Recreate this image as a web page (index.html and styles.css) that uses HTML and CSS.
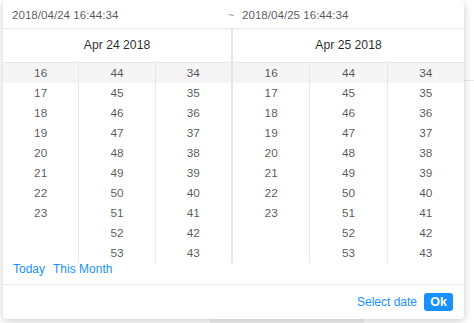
FILE: index.html
```html
<!DOCTYPE html>
<html>
<head>
<meta charset="utf-8">
<link rel="stylesheet" href="styles.css">
</head>
<body>
<div class="page">
  <div class="bg-line"></div>
  <div class="bg-block"></div>
  <div class="picker">
    <div class="inputs">
      <span class="in in-start">2018/04/24 16:44:34</span>
      <span class="sep">~</span>
      <span class="in in-end">2018/04/25 16:44:34</span>
    </div>
    <div class="panels">
      <div class="panel panel-left">
        <div class="phead">Apr 24 2018</div>
        <div class="cols">
          <ul class="col"><li class="sel">16</li><li>17</li><li>18</li><li>19</li><li>20</li><li>21</li><li>22</li><li>23</li><li class="empty"></li><li class="empty"></li></ul>
          <ul class="col"><li class="sel">44</li><li>45</li><li>46</li><li>47</li><li>48</li><li>49</li><li>50</li><li>51</li><li>52</li><li>53</li></ul>
          <ul class="col"><li class="sel">34</li><li>35</li><li>36</li><li>37</li><li>38</li><li>39</li><li>40</li><li>41</li><li>42</li><li>43</li></ul>
        </div>
      </div>
      <div class="panel panel-right">
        <div class="phead">Apr 25 2018</div>
        <div class="cols">
          <ul class="col"><li class="sel">16</li><li>17</li><li>18</li><li>19</li><li>20</li><li>21</li><li>22</li><li>23</li><li class="empty"></li><li class="empty"></li></ul>
          <ul class="col"><li class="sel">44</li><li>45</li><li>46</li><li>47</li><li>48</li><li>49</li><li>50</li><li>51</li><li>52</li><li>53</li></ul>
          <ul class="col"><li class="sel">34</li><li>35</li><li>36</li><li>37</li><li>38</li><li>39</li><li>40</li><li>41</li><li>42</li><li>43</li></ul>
        </div>
      </div>
    </div>
    <div class="ranges">
      <a class="link">Today</a>
      <a class="link">This Month</a>
    </div>
    <div class="footer">
      <a class="link">Select date</a>
      <button class="ok">Ok</button>
    </div>
  </div>
</div>
</body>
</html>
```

FILE: styles.css
```css
html, body {
  margin: 0;
  padding: 0;
  background: #fff;
}
body {
  font-family: "Liberation Sans", Arial, sans-serif;
  font-size: 12px;
  color: rgba(0, 0, 0, 0.65);
}
.page {
  position: relative;
  width: 474px;
  height: 323px;
  overflow: hidden;
}
.bg-line {
  position: absolute;
  left: 440px;
  top: 80px;
  width: 34px;
  height: 1px;
  background: #e8e8e8;
}
.bg-block {
  position: absolute;
  left: 210px;
  top: 318px;
  width: 154px;
  height: 5px;
  background: #f2f2f2;
}
.picker {
  position: absolute;
  left: 3px;
  top: 0;
  width: 461px;
  background: #fff;
  border-radius: 4px;
  box-shadow: 0 2px 8px rgba(0, 0, 0, 0.2);
}
.inputs {
  display: flex;
  align-items: center;
  height: 28px;
  border-bottom: 1px solid #e8e8e8;
  font-size: 11.6px;
  color: rgba(0, 0, 0, 0.68);
}
.in-start {
  width: 211px;
  padding-left: 9px;
}
.sep {
  width: 16px;
  text-align: center;
  color: rgba(0, 0, 0, 0.45);
}
.in-end {
  padding-left: 3px;
}
.panels {
  display: flex;
}
.panel {
  flex: 0 0 auto;
}
.panel-left {
  width: 228px;
  border-right: 1px solid #e6e6e6;
}
.panel-right {
  width: 231px;
  border-left: 1px solid #e6e6e6;
}
.phead {
  height: 33px;
  line-height: 33px;
  text-align: center;
  font-size: 12.2px;
  color: rgba(0, 0, 0, 0.85);
  border-bottom: 1px solid #e8e8e8;
}
.cols {
  display: flex;
  height: 200px;
}
.col {
  list-style: none;
  margin: 0;
  padding: 0;
  flex: 1 1 0;
  border-right: 1px solid #e8e8e8;
}
.col:last-child {
  border-right: none;
}
.col li {
  height: 20px;
  line-height: 20px;
  text-align: center;
  font-size: 11.8px;
  color: rgba(0, 0, 0, 0.68);
}
.col li.sel {
  background: #f5f5f5;
}
.ranges {
  display: flex;
  gap: 8px;
  height: 21px;
  padding: 0 10px;
  line-height: 13px;
  border-bottom: 1px solid #e8e8e8;
}
.link {
  color: #1890ff;
  font-size: 12px;
}
.footer {
  display: flex;
  justify-content: flex-end;
  align-items: center;
  gap: 7px;
  height: 34px;
  padding-right: 11px;
}
.ok {
  width: 29px;
  height: 18px;
  padding: 0;
  border: none;
  border-radius: 3px;
  background: #1890ff;
  color: #fff;
  font-family: "Liberation Sans", Arial, sans-serif;
  font-size: 12.5px;
  font-weight: bold;
  line-height: 18px;
}
```
